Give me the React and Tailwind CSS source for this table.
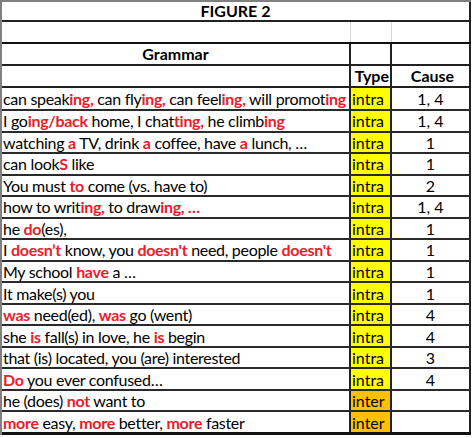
import React from 'react';

const rows = [
  ['can speak**ing,** can fly**ing,** can feel**ing,** will promot**ing**', 'intra', '1, 4'],
  ['I go**ing/back** home, I chat**ting,** he climb**ing**', 'intra', '1, 4'],
  ['watching **a** TV, drink **a** coffee, have **a** lunch, …', 'intra', '1'],
  ['can look**S** like', 'intra', '1'],
  ['You must **to** come (vs. have to)', 'intra', '2'],
  ['how to writ**ing,** to draw**ing, …**', 'intra', '1, 4'],
  ['he **do**(es),', 'intra', '1'],
  ['I **doesn’t** know, you **doesn\'t** need, people **doesn\'t**', 'intra', '1'],
  ['My school **have** a …', 'intra', '1'],
  ['It make(s) you', 'intra', '1'],
  ['**was** need(ed), **was** go (went)', 'intra', '4'],
  ['she **is** fall(s) in love, he **is** begin', 'intra', '4'],
  ['that (is) located, you (are) interested', 'intra', '3'],
  ['**Do** you ever confused…', 'intra', '4'],
  ['he (does) **not** want to', 'inter', ''],
  ['**more** easy, **more** better, **more** faster', 'inter', ''],
];

// "**x**" marks the red bold parts
function Marked({ text }) {
  const parts = text.split('**');
  return (
    <span className="whitespace-pre">
      {parts.map((p, i) =>
        i % 2 ? <span key={i} className="font-bold text-[#e8202a]">{p}</span> : p
      )}
    </span>
  );
}

export default function App() {
  return (
    <div className="w-[474px] h-[438px] bg-white text-black overflow-hidden" style={{ fontFamily: 'Lato, "Liberation Sans", sans-serif' }}>
      <div className="w-[471px] border-l-2 border-t-2 border-[#808080]">
        {/* title */}
        <div className="h-[20px] border-b-2 border-[#222] border-r-2 flex items-center justify-center font-bold text-[16px] leading-none">
          FIGURE 2
        </div>
        {/* empty row */}
        <div className="h-[22px] grid grid-cols-[349px_41px_79px] border-b-2 border-[#111]">
          <div className="border-r border-[#d4d4d4]" />
          <div className="border-r border-[#d4d4d4]" />
          <div className="border-r-2 border-[#222]" />
        </div>
        {/* headers */}
        <div className="h-[22px] grid grid-cols-[349px_41px_79px] border-b-2 border-[#222] font-bold text-[16px] leading-none">
          <div className="border-r-2 border-[#222] flex items-center justify-center">Grammar</div>
          <div className="border-r-2 border-[#222]" />
          <div className="border-r-2 border-[#222]" />
        </div>
        <div className="h-[22px] grid grid-cols-[349px_41px_79px] border-b-2 border-[#222] font-bold text-[16px] leading-none">
          <div className="border-r-2 border-[#222]" />
          <div className="border-r-2 border-[#222] flex items-end justify-end pb-[2px] pr-[1px]">Type</div>
          <div className="border-r-2 border-[#222] flex items-end justify-center pb-[2px] pl-[4px]">Cause</div>
        </div>
        {/* data */}
        <div className="h-[347px] flex flex-col text-[16px] leading-none">
          {rows.map(([g, t, c], i) => (
            <div
              key={i}
              className={`grid grid-cols-[349px_41px_79px] ${i === 0 ? 'h-[23px] shrink-0' : 'flex-1'} ${i === rows.length - 1 ? 'border-b-[3px] border-[#111]' : 'border-b-2 border-[#2a2a2a]'}`}
            >
              <div className="border-r-2 border-[#222] flex items-center pt-[1px] pl-[1px] overflow-hidden tracking-[-0.3px]">
                <Marked text={g} />
              </div>
              <div className={`border-r-2 border-[#222] flex items-center pt-[1px] pl-[1px] ${t === 'inter' ? 'bg-[#ffc000]' : 'bg-[#ffff00]'}`}>
                {t}
              </div>
              <div className="border-r-2 border-[#222] flex items-center justify-center pt-[1px]">{c}</div>
            </div>
          ))}
        </div>
      </div>
    </div>
  );
}
